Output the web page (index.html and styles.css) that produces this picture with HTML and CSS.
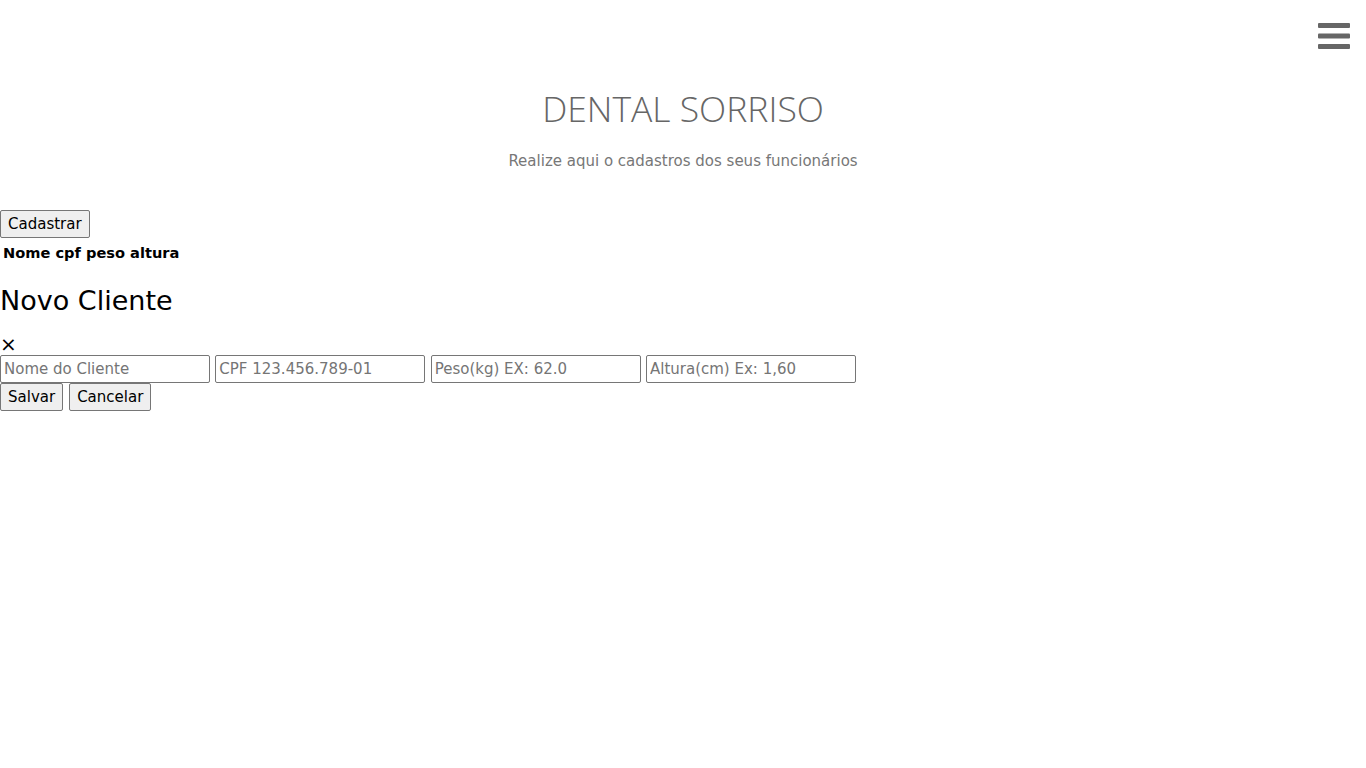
FILE: index.html
```html
<!DOCTYPE html>
<html lang="pt-BR">
<head>
<meta charset="utf-8">
<title>Dental Sorriso</title>
<link rel="stylesheet" href="styles.css">
</head>
<body>
<header class="topbar">
  <button class="menu" aria-label="Menu">
    <svg width="32" height="28" viewBox="0 0 32 28"><rect x="0" y="1" width="32" height="5" rx="1" fill="#666"/><rect x="0" y="11.5" width="32" height="5" rx="1" fill="#666"/><rect x="0" y="22" width="32" height="5" rx="1" fill="#666"/></svg>
  </button>
</header>
<section class="hero">
  <h1 class="title">DENTAL SORRISO</h1>
  <p class="subtitle">Realize aqui o cadastros dos seus funcionários</p>
</section>
<main class="content">
  <button class="btn">Cadastrar</button>
  <table class="list">
    <thead><tr><th>Nome cpf peso altura</th></tr></thead>
  </table>
  <div class="modal">
    <h2 class="modal-title">Novo Cliente</h2>
    <span class="close">×</span>
    <form class="form">
      <div class="fields">
        <input class="field" type="text" placeholder="Nome do Cliente">
        <input class="field" type="text" placeholder="CPF 123.456.789-01">
        <input class="field" type="text" placeholder="Peso(kg) EX: 62.0">
        <input class="field" type="text" placeholder="Altura(cm) Ex: 1,60">
      </div>
      <div class="actions">
        <button class="btn" type="button">Salvar</button>
        <button class="btn" type="button">Cancelar</button>
      </div>
    </form>
  </div>
</main>
</body>
</html>
```
FILE: styles.css
```css
* { box-sizing: border-box; }
html, body { margin: 0; padding: 0; background: #fff; }
body { font-family: "DejaVu Sans", Verdana, sans-serif; color: #000; }

.topbar { display: flex; justify-content: flex-end; padding: 22px 16px 0 0; height: 49px; }
.menu { background: none; border: 0; padding: 0; margin: 0; width: 32px; height: 28px; cursor: pointer; }
.menu svg { display: block; }

.hero { text-align: center; padding-top: 35px; }
.title { margin: 0; font-family: "Open Sans", sans-serif; font-weight: 300; font-size: 35.5px; line-height: 48px; color: #666; }
.subtitle { margin: 19px 0 0; font-size: 15px; line-height: 20px; color: #777; }

.content { padding-top: 39px; }
.btn { font-family: "DejaVu Sans", Verdana, sans-serif; font-size: 15px; height: 28px; padding: 0 7px; margin: 0; background: #efefef; border: 1px solid #767676; border-radius: 2px; color: #000; }
.list { border-spacing: 2px; margin: 0; }
.list th { font-size: 14.6px; font-weight: bold; padding: 1px; text-align: left; line-height: 24px; }

.modal-title { margin: 17px 0 0; font-weight: normal; font-size: 27px; line-height: 32px; }
.close { display: block; font-size: 20px; line-height: 22px; height: 22px; margin-top: 16px; }
.form { margin: 0; }
.fields { display: flex; gap: 5.33px; }
.field { width: 210px; height: 28px; margin: 0; padding: 0 3px; font-family: "DejaVu Sans", Verdana, sans-serif; font-size: 15px; border: 1px solid #767676; border-radius: 2px; }
.field::placeholder { color: #757575; }
.actions { display: flex; gap: 6px; }
```
